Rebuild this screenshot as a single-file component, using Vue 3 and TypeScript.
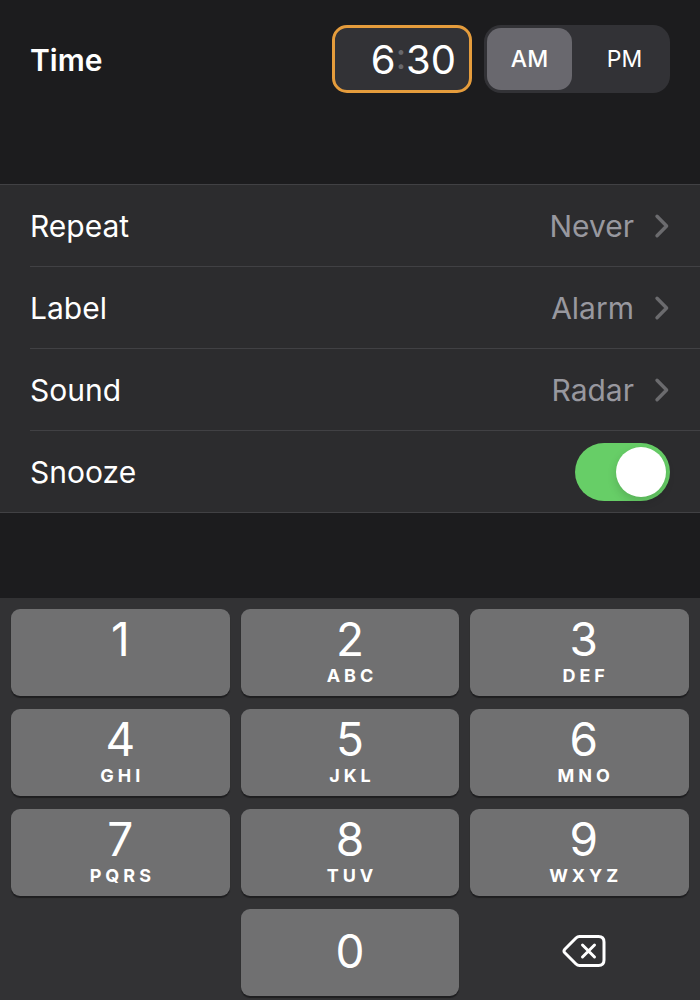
<script setup lang="ts">
import { ref } from 'vue'

interface Setting {
  name: string
  value: string
}

interface Key {
  digit: string
  letters: string
}

const hour = ref('6')
const minute = ref('30')
const period = ref<'AM' | 'PM'>('AM')
const periods = ['AM', 'PM'] as const
const snooze = ref(true)

const settings: Setting[] = [
  { name: 'Repeat', value: 'Never' },
  { name: 'Label', value: 'Alarm' },
  { name: 'Sound', value: 'Radar' },
]

const keys: Key[] = [
  { digit: '1', letters: '' },
  { digit: '2', letters: 'ABC' },
  { digit: '3', letters: 'DEF' },
  { digit: '4', letters: 'GHI' },
  { digit: '5', letters: 'JKL' },
  { digit: '6', letters: 'MNO' },
  { digit: '7', letters: 'PQRS' },
  { digit: '8', letters: 'TUV' },
  { digit: '9', letters: 'WXYZ' },
]

function press(digit: string): void {
  const digits = (hour.value + minute.value + digit).slice(-4)
  minute.value = digits.slice(-2)
  hour.value = digits.slice(0, -2)
}

function erase(): void {
  const digits = (hour.value + minute.value).slice(0, -1)
  minute.value = digits.slice(-2)
  hour.value = digits.slice(0, -2)
}
</script>

<template>
  <main class="screen">
    <header class="time-bar">
      <h1 class="title">Time</h1>
      <div class="time-field" role="group" aria-label="Time">
        <input v-model="hour" class="hour" type="text" inputmode="numeric" maxlength="2" aria-label="Hour" />
        <span class="colon">:</span>
        <input v-model="minute" class="minute" type="text" inputmode="numeric" maxlength="2" aria-label="Minute" />
      </div>
      <div class="segments" role="radiogroup" aria-label="AM or PM">
        <label v-for="p in periods" :key="p" class="segment" :class="{ selected: period === p }">
          <input v-model="period" class="segment-input" type="radio" name="period" :value="p" />
          {{ p }}
        </label>
      </div>
    </header>

    <ul class="settings">
      <li v-for="s in settings" :key="s.name" class="item">
        <button class="row" type="button">
          <span class="name">{{ s.name }}</span>
          <span class="value">{{ s.value }}</span>
          <svg class="chevron" viewBox="0 0 16 26" aria-hidden="true">
            <path d="M3 3.2 L12.6 13 L3 22.8" />
          </svg>
        </button>
      </li>
      <li class="item">
        <label class="row">
          <span class="name">Snooze</span>
          <input v-model="snooze" class="switch" type="checkbox" role="switch" />
        </label>
      </li>
    </ul>

    <section class="keypad" aria-label="Number pad">
      <button v-for="k in keys" :key="k.digit" class="key" type="button" @click="press(k.digit)">
        <span class="digit">{{ k.digit }}</span>
        <span v-if="k.letters" class="letters">{{ k.letters }}</span>
      </button>
      <button class="key zero" type="button" @click="press('0')">
        <span class="digit">0</span>
      </button>
      <button class="delete" type="button" aria-label="Delete" @click="erase">
        <svg class="delete-icon" viewBox="0 0 44 34" aria-hidden="true">
          <path
            d="M17.5 2.5 H36.5 Q42 2.5 42 8 V26 Q42 31.5 36.5 31.5 H17.5 Q15.5 31.5 14 30 L2.8 18.8 Q1.2 17 2.8 15.2 L14 4 Q15.5 2.5 17.5 2.5 Z"
          />
          <path d="M20.5 11 L32.5 23 M32.5 11 L20.5 23" />
        </svg>
      </button>
    </section>
  </main>
</template>

<style>
body {
  margin: 0;
  background: #1c1c1e;
}
</style>

<style scoped>
.screen {
  display: flex;
  flex-direction: column;
  min-height: 100vh;
  background: #1c1c1e;
  color: #fff;
  font-family: Inter, "Liberation Sans", sans-serif;
  font-size: 30px;
}

.screen * {
  box-sizing: border-box;
}

button,
input {
  margin: 0;
  padding: 0;
  border: 0;
  background: none;
  color: inherit;
  font: inherit;
}

.time-bar {
  display: flex;
  align-items: center;
  gap: 12px;
  padding: 25px 30px 91px;
}

.title {
  flex: 1;
  margin: 0;
  padding-top: 2px;
  font-size: 30px;
  font-weight: 600;
  line-height: 40px;
}

.time-field {
  display: flex;
  align-items: center;
  width: 140px;
  height: 68px;
  padding: 0 13px;
  border: 3px solid #e59c3c;
  border-radius: 15px;
  background: #323236;
  font-size: 40px;
}

.time-field input {
  min-width: 0;
  outline: none;
}

.hour {
  flex: 1;
  text-align: right;
}

.minute {
  width: 50px;
  text-align: right;
}

.colon {
  padding-bottom: 6px;
  color: #68686c;
  font-size: 36px;
}

.segments {
  display: flex;
  gap: 10px;
  width: 186px;
  height: 68px;
  padding: 3px;
  border-radius: 17px;
  background: #323236;
}

.segment {
  position: relative;
  display: flex;
  flex: 1;
  align-items: center;
  justify-content: center;
  border-radius: 14px;
  font-size: 23px;
}

.segment.selected {
  background: #69686e;
  font-weight: 500;
}

.segment-input {
  position: absolute;
  inset: 0;
  opacity: 0;
}

.settings {
  margin: 0 0 85px;
  padding: 0;
  border-top: 1px solid #414144;
  border-bottom: 1px solid #414144;
  background: #2c2c2e;
  list-style: none;
}

.item {
  padding-left: 30px;
}

.item + .item .row {
  border-top: 1px solid #414144;
  height: 82px;
}

.row {
  display: flex;
  align-items: center;
  width: 100%;
  height: 81px;
  padding-right: 30px;
  text-align: left;
}

.name {
  flex: 1;
}

.value {
  color: #98989f;
}

.chevron {
  width: 16px;
  height: 26px;
  margin-left: 20px;
  fill: none;
  stroke: #6b6b6e;
  stroke-width: 3.4;
  stroke-linecap: round;
  stroke-linejoin: round;
}

.switch {
  display: flex;
  align-items: center;
  width: 95px;
  height: 58px;
  padding: 0 4px;
  border-radius: 29px;
  appearance: none;
  background: #39393d;
}

.switch::before {
  content: "";
  width: 50px;
  height: 50px;
  border-radius: 50%;
  background: #fff;
  box-shadow: 0 4px 10px rgba(0, 0, 0, 0.15);
}

.switch:checked {
  justify-content: flex-end;
  background: #67ce67;
}

.keypad {
  display: grid;
  flex: 1;
  grid-template-columns: repeat(3, 1fr);
  grid-auto-rows: 87px;
  gap: 13px 11px;
  padding: 11px 11px 4px;
  background: #323234;
}

.key {
  display: flex;
  flex-direction: column;
  align-items: center;
  padding-top: 2px;
  border-radius: 9px;
  background: #707071;
  box-shadow: 0 2px 1px #1e1e20;
}

.key:nth-child(3n) {
  padding-left: 8px;
}

.digit {
  font-size: 46px;
  line-height: 56px;
}

.letters {
  padding-left: 4px;
  font-size: 18px;
  font-weight: 700;
  line-height: 18px;
  letter-spacing: 4px;
}

.zero {
  grid-column: 2;
  justify-content: center;
  padding: 0 0 4px;
}

.delete {
  display: flex;
  align-items: center;
  justify-content: center;
  padding: 0 0 4px 8px;
}

.delete-icon {
  width: 44px;
  height: 34px;
  fill: none;
  stroke: #fff;
  stroke-width: 3;
  stroke-linecap: round;
  stroke-linejoin: round;
}
</style>
